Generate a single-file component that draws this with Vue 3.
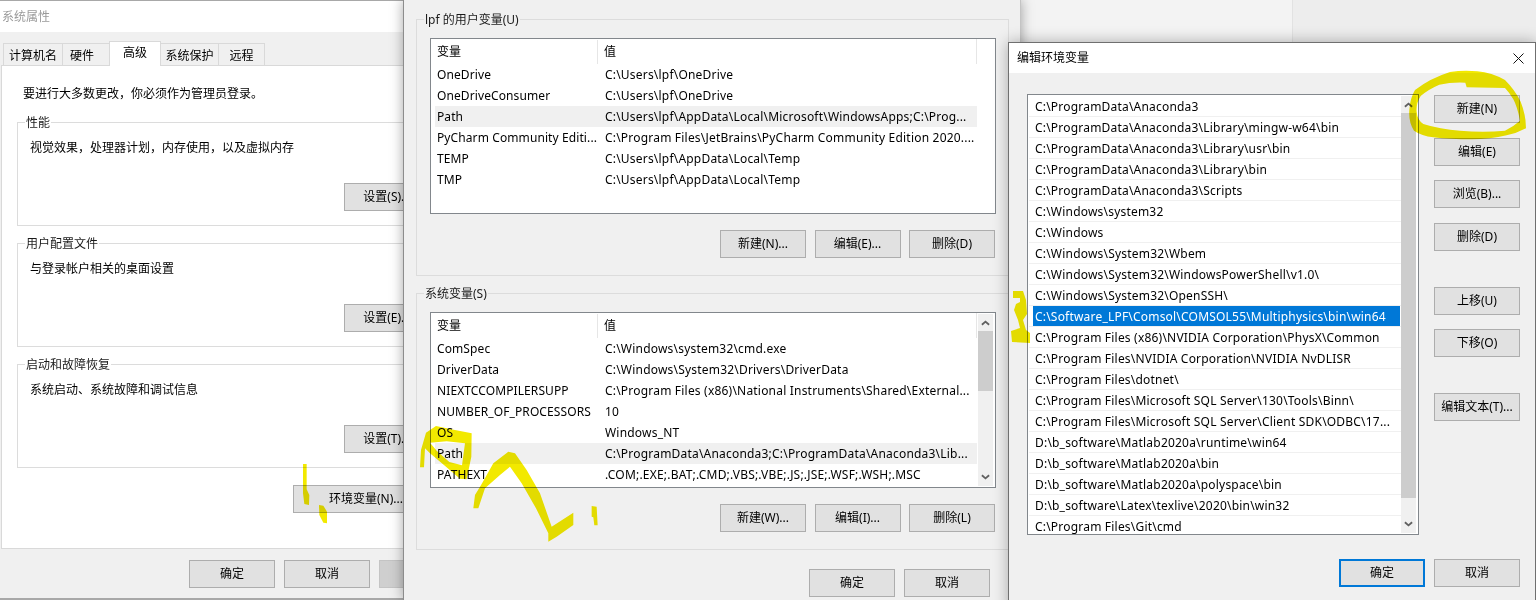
<script setup>
const userVars = [
  ['OneDrive', 'C:\\Users\\lpf\\OneDrive'],
  ['OneDriveConsumer', 'C:\\Users\\lpf\\OneDrive'],
  ['Path', 'C:\\Users\\lpf\\AppData\\Local\\Microsoft\\WindowsApps;C:\\Prog...', true],
  ['PyCharm Community Editi...', 'C:\\Program Files\\JetBrains\\PyCharm Community Edition 2020....'],
  ['TEMP', 'C:\\Users\\lpf\\AppData\\Local\\Temp'],
  ['TMP', 'C:\\Users\\lpf\\AppData\\Local\\Temp'],
]
const sysVars = [
  ['ComSpec', 'C:\\Windows\\system32\\cmd.exe'],
  ['DriverData', 'C:\\Windows\\System32\\Drivers\\DriverData'],
  ['NIEXTCCOMPILERSUPP', 'C:\\Program Files (x86)\\National Instruments\\Shared\\External...'],
  ['NUMBER_OF_PROCESSORS', '10'],
  ['OS', 'Windows_NT'],
  ['Path', 'C:\\ProgramData\\Anaconda3;C:\\ProgramData\\Anaconda3\\Lib...', true],
  ['PATHEXT', '.COM;.EXE;.BAT;.CMD;.VBS;.VBE;.JS;.JSE;.WSF;.WSH;.MSC'],
]
const paths = [
  'C:\\ProgramData\\Anaconda3',
  'C:\\ProgramData\\Anaconda3\\Library\\mingw-w64\\bin',
  'C:\\ProgramData\\Anaconda3\\Library\\usr\\bin',
  'C:\\ProgramData\\Anaconda3\\Library\\bin',
  'C:\\ProgramData\\Anaconda3\\Scripts',
  'C:\\Windows\\system32',
  'C:\\Windows',
  'C:\\Windows\\System32\\Wbem',
  'C:\\Windows\\System32\\WindowsPowerShell\\v1.0\\',
  'C:\\Windows\\System32\\OpenSSH\\',
  'C:\\Software_LPF\\Comsol\\COMSOL55\\Multiphysics\\bin\\win64',
  'C:\\Program Files (x86)\\NVIDIA Corporation\\PhysX\\Common',
  'C:\\Program Files\\NVIDIA Corporation\\NVIDIA NvDLISR',
  'C:\\Program Files\\dotnet\\',
  'C:\\Program Files\\Microsoft SQL Server\\130\\Tools\\Binn\\',
  'C:\\Program Files\\Microsoft SQL Server\\Client SDK\\ODBC\\17...',
  'D:\\b_software\\Matlab2020a\\runtime\\win64',
  'D:\\b_software\\Matlab2020a\\bin',
  'D:\\b_software\\Matlab2020a\\polyspace\\bin',
  'D:\\b_software\\Latex\\texlive\\2020\\bin\\win32',
  'C:\\Program Files\\Git\\cmd',
]
const groups = [
  { title: '性能', desc: '视觉效果，处理器计划，内存使用，以及虚拟内存', btn: '设置(S)...' },
  { title: '用户配置文件', desc: '与登录帐户相关的桌面设置', btn: '设置(E)...' },
  { title: '启动和故障恢复', desc: '系统启动、系统故障和调试信息', btn: '设置(T)...' },
]
const tabs = ['计算机名', '硬件', '高级', '系统保护', '远程']
const sideButtons = [
  { label: '新建(N)' }, { label: '编辑(E)' }, { label: '浏览(B)...' }, { label: '删除(D)' },
  { label: '上移(U)', gap: true }, { label: '下移(O)' }, { label: '编辑文本(T)...', gap: true },
]
</script>

<template>
  <div class="desktop">
    <div class="back back-a"></div>
    <div class="back back-b"></div>

    <section class="win win-one">
      <div class="title muted">系统属性</div>
      <div class="tabs">
        <span v-for="(t, i) in tabs" :key="t" class="tab" :class="['tab-' + i, { active: i === 2 }]">{{ t }}</span>
      </div>
      <div class="panel">
        <p class="intro">要进行大多数更改，你必须作为管理员登录。</p>
        <div v-for="g in groups" :key="g.title" class="prop-group">
          <span class="legend legend-white">{{ g.title }}</span>
          <p class="desc">{{ g.desc }}</p>
          <button class="btn set-btn">{{ g.btn }}</button>
        </div>
        <button class="btn env-btn">环境变量(N)...</button>
      </div>
      <div class="foot-one">
        <button class="btn">确定</button>
        <button class="btn">取消</button>
        <button class="btn disabled">应用(A)</button>
      </div>
    </section>

    <section class="win win-two">
      <div class="var-group first">
        <span class="legend">lpf 的用户变量(U)</span>
        <div class="list">
          <div class="list-head"><span class="h-name">变量</span><span class="h-val">值</span></div>
          <div v-for="r in userVars" :key="r[0]" class="row" :class="{ shade: r[2] }">
            <span class="c-name">{{ r[0] }}</span><span class="c-val">{{ r[1] }}</span>
          </div>
        </div>
        <div class="btn-row">
          <button class="btn">新建(N)...</button>
          <button class="btn">编辑(E)...</button>
          <button class="btn">删除(D)</button>
        </div>
      </div>
      <div class="var-group">
        <span class="legend">系统变量(S)</span>
        <div class="list">
          <div class="list-head"><span class="h-name">变量</span><span class="h-val">值</span></div>
          <div v-for="r in sysVars" :key="r[0]" class="row" :class="{ shade: r[2] }">
            <span class="c-name">{{ r[0] }}</span><span class="c-val">{{ r[1] }}</span>
          </div>
          <div class="scroll scroll-sys">
            <svg class="arrow up" viewBox="0 0 10 6"><path d="M1 5 5 1.5 9 5" /></svg>
            <div class="thumb"></div>
            <svg class="arrow down" viewBox="0 0 10 6"><path d="M1 1 5 4.5 9 1" /></svg>
          </div>
        </div>
        <div class="btn-row">
          <button class="btn">新建(W)...</button>
          <button class="btn">编辑(I)...</button>
          <button class="btn">删除(L)</button>
        </div>
      </div>
      <div class="foot-two">
        <button class="btn">确定</button>
        <button class="btn">取消</button>
      </div>
    </section>

    <section class="win win-three">
      <div class="title title-three">
        <span>编辑环境变量</span>
        <svg class="close" viewBox="0 0 11 11"><path d="M.5.5l10 10M10.500.5l-10 10" /></svg>
      </div>
      <div class="edit-body">
        <div class="path-list">
          <div v-for="(p, i) in paths" :key="p" class="path-row" :class="{ selected: i === 10 }"><span>{{ p }}</span></div>
          <div class="scroll scroll-path">
            <svg class="arrow up" viewBox="0 0 10 6"><path d="M1 5 5 1.5 9 5" /></svg>
            <div class="thumb"></div>
            <svg class="arrow down" viewBox="0 0 10 6"><path d="M1 1 5 4.5 9 1" /></svg>
          </div>
        </div>
        <div class="side">
          <button v-for="b in sideButtons" :key="b.label" class="btn" :class="{ spaced: b.gap }">{{ b.label }}</button>
        </div>
      </div>
      <div class="foot-three">
        <button class="btn primary">确定</button>
        <button class="btn">取消</button>
      </div>
    </section>

    <svg class="ink" viewBox="0 0 1536 600" width="1536" height="600">
      <g transform="translate(1400 60) scale(.3333)">
        <path fill-rule="evenodd" stroke-linejoin="round" d="M150 36Q190 30 232 34Q275 38 315 60Q345 90 362 125Q378 165 378 205Q350 220 320 226Q270 238 215 238Q150 238 100 232Q65 228 42 212Q25 185 28 150Q30 115 45 90Q90 55 150 36ZM118 74Q85 88 62 108Q48 130 50 155Q52 180 70 192Q120 208 180 212Q250 218 315 212Q340 200 360 182Q352 140 340 118Q330 100 315 84L200 82L196 68Q155 66 118 74Z" />
      </g>
      <g transform="translate(280 450) scale(.3333)">
        <path d="M69 42 80 42 80 118 88 135 87 165 73 162 69 130Z" />
        <path d="M117 165 130 167 141 185 141 220 130 218 118 195Z" />
      </g>
      <g transform="translate(410 420) scale(.3333)">
        <path fill-rule="evenodd" d="M30 142 33 90 48 38 78 18 135 30 185 40 184 110 170 178 150 176 108 140 60 100 45 85 42 142ZM60 68 80 92 118 126 156 136 165 70 110 64Z" />
        <path d="M190 265 195 225 215 192 250 130 295 95 315 100 350 150 390 220 425 320 490 278 490 315 440 350 415 365 415 340 378 265 335 190 300 140 270 165 225 205 205 265Z" />
        <path d="M545 258 560 260 563 316 553 316 550 292 545 290Z" />
      </g>
      <path d="M1013 291 1023 291 1026 300 1027 314 1023 320 1026 330 1030 333 1030 343 1012 342 1011 331 1020 328 1018 320 1014 310 1016 304 1020 302 1020 298 1013 298Z" />
    </svg>
  </div>
</template>

<style>
html, body { margin: 0; background: #f0f0f0; overflow: hidden; }
</style>

<style scoped>
.desktop {
  position: relative;
  width: 1536px;
  height: 600px;
  overflow: hidden;
  font-family: "Noto Sans", "Noto Sans CJK SC", sans-serif;
  font-size: 12px;
  line-height: 20px;
  color: #000;
}
p { margin: 0; }
.back { position: absolute; top: 0; height: 600px; }
.back-a { left: 1020px; width: 272px; background: #f3f3f3; border-right: 1px solid #e2e2e2; }
.back-b { left: 1293px; width: 243px; background: #ededed; }

.win { position: absolute; overflow: hidden; box-sizing: border-box; background: #f0f0f0; }
.win-one {
  left: 0; top: 0; width: 404px; height: 600px;
  border-top: 1px solid #a8a8a8;
  border-bottom: 2px solid #a8a8a8;
}
.win-two {
  left: 403px; top: 0; width: 618px; height: 600px;
  border-left: 1px solid #8c8c8c;
  border-right: 1px solid #c4c4c4;
  box-shadow: 0 0 12px rgba(0, 0, 0, .35);
  overflow: visible;
}
.win-three {
  left: 1008px; top: 42px; width: 528px; height: 570px;
  border: 1px solid #6f6f6f;
  box-shadow: 0 0 14px rgba(0, 0, 0, .3);
}

.title { height: 31px; background: #fff; line-height: 31px; padding-left: 2px; }
.muted { color: #9a9a9a; }
.title-three {
  height: 30px; line-height: 30px; padding-left: 8px;
  display: flex; align-items: center; justify-content: space-between;
}
.close { width: 11px; height: 11px; margin-right: 11px; fill: none; stroke: #111; stroke-width: 1; }

.tabs { display: flex; height: 33px; align-items: flex-end; padding-left: 3px; position: relative; z-index: 1; }
.tab {
  box-sizing: border-box; height: 22px; line-height: 23px; text-align: center;
  border: 1px solid #d9d9d9; border-bottom: 0; margin-left: -1px;
  margin-bottom: 0;
}
.tab-0 { width: 60px; margin-left: 0; }
.tab-1 { width: 48px; text-align: left; padding-left: 7px; }
.tab-2 { width: 52px; }
.tab-3 { width: 59px; }
.tab-4 { width: 47px; }
.active { height: 25px; line-height: 21px; background: #fff; margin-bottom: -1px; }

.panel {
  box-sizing: border-box; width: 440px; height: 484px; margin-left: 1px;
  background: #fff; border: 1px solid #d9d9d9;
  padding: 18px 0 0 15px;
}
.intro { padding-left: 6px; margin-bottom: 18px; }
.prop-group {
  position: relative; box-sizing: border-box; height: 104px; margin-bottom: 17px;
  border: 1px solid #dcdcdc; padding: 15px 0 0 12px;
}
.legend {
  position: absolute; top: -10px; left: 7px; padding: 0 1px; background: #f0f0f0; color: #1a1a1a;
}
.legend-white { background: #fff; }
.desc { height: 20px; }
.set-btn { display: block; margin: 25px 0 0 314px; }
.env-btn { display: block; margin-left: 276px; }
.foot-one { display: flex; gap: 9px; padding: 11px 0 0 189px; }

.btn {
  box-sizing: border-box; flex: none; width: 86px; height: 28px; padding: 0;
  font: inherit; color: #000; text-align: center; white-space: nowrap;
  background: #e1e1e1; border: 1px solid #adadad; border-radius: 0;
}
.btn.env-btn { width: 146px; }
.disabled { background: #cfcfcf; border-color: #c4c4c4; color: #a0a0a0; }
.primary { border: 2px solid #0078d7; }

.var-group {
  position: relative; box-sizing: border-box; width: 593px; height: 257px; margin-left: 12px;
  border: 1px solid #dcdcdc; padding: 18px 12px 0 13px;
}
.first { margin-top: 19px; margin-bottom: 17px; }
.list {
  position: relative; box-sizing: border-box; height: 176px; overflow: hidden;
  background: #fff; border: 1px solid #82878c; padding-left: 4px;
}
.list-head { display: flex; width: 542px; height: 25px; padding-top: 1px; box-sizing: border-box; border-right: 1px solid #e6e6e6; }
.h-name { width: 163px; box-sizing: border-box; padding-left: 2px; border-right: 1px solid #e6e6e6; line-height: 24px; }
.h-val { padding-left: 6px; line-height: 24px; }
.row { display: flex; width: 542px; height: 21px; line-height: 21px; white-space: nowrap; }
.shade { background: #f0f0f0; }
.c-name { width: 163px; padding-left: 2px; box-sizing: border-box; overflow: hidden; letter-spacing: .1px; }
.c-val { padding-left: 7px; letter-spacing: .2px; }
.btn-row { display: flex; justify-content: flex-end; gap: 8.5px; margin-top: 16px; padding-right: 1px; }
.foot-two { display: flex; justify-content: flex-end; gap: 9px; margin-top: 19px; padding-right: 30px; }

.scroll { position: absolute; background: #f0f0f0; width: 15px; }
.scroll-sys { right: 2px; top: 1px; bottom: 1px; }
.scroll-path { right: 2px; top: 1px; bottom: 1px; }
.thumb { position: absolute; left: 0; right: 0; background: #cdcdcd; }
.scroll-sys .thumb { top: 17px; height: 60px; }
.scroll-path .thumb { top: 17px; height: 385px; }
.arrow { position: absolute; left: 3px; width: 9px; height: 6px; fill: none; stroke: #606060; stroke-width: 2; }
.up { top: 6px; }
.down { bottom: 6px; }

.edit-body { display: flex; padding: 21px 0 0 18px; }
.path-list {
  position: relative; box-sizing: border-box; flex: none; width: 392px; height: 441px; overflow: hidden;
  background: #fff; border: 1px solid #82878c; padding: 1px 0 0 1px;
}
.path-row {
  box-sizing: border-box; width: 372px; height: 21px; line-height: 20px; white-space: nowrap;
  border-bottom: 1px solid #f0f0f0; padding: 1px 0 0 6px; letter-spacing: .2px;
}
.selected { padding-top: 0; }
.selected span {
  display: block; margin-left: -2px; width: 367px; padding-left: 2px; height: 20px; line-height: 22px;
  box-sizing: border-box; background: #0078d7; color: #fff;
}
.side { display: flex; flex-direction: column; gap: 14.5px; margin: 1px 0 0 15px; }
.spaced { margin-top: 21.5px; }
.foot-three { display: flex; justify-content: flex-end; gap: 9px; padding: 24px 15px 0 0; }

.ink {
  position: absolute; left: 0; top: 0; pointer-events: none;
  fill: #f2e900; mix-blend-mode: multiply;
}
</style>
